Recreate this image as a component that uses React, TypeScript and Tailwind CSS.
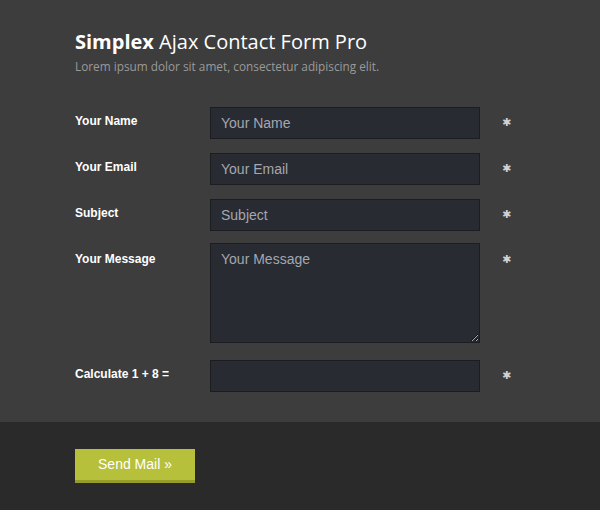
import React from "react";

const FIELDS = [
  { label: "Your Name", placeholder: "Your Name" },
  { label: "Your Email", placeholder: "Your Email" },
  { label: "Subject", placeholder: "Subject" },
];

const inputCls =
  "w-[270px] h-8 bg-[#292b32] border border-[#1c1d21] px-[10px] text-[14px] text-[#a3a7b0] placeholder:text-[#a3a7b0] outline-none font-['Liberation_Sans',Arial,sans-serif]";

function Star() {
  return (
    <span className="block w-[52px] pl-[22px] text-[11px] text-[#d2d2d2] leading-none font-['DejaVu_Sans',sans-serif]">
      ✱
    </span>
  );
}

export default function App() {
  return (
    <div className="w-[600px] h-[510px] flex flex-col bg-[#3d3d3d] font-['Liberation_Sans',Arial,sans-serif]">
      <div className="flex-1 pl-[75px] pt-[29px]">
        <h1 className="text-[20px] leading-[26px] text-white font-['Open_Sans',sans-serif]">
          <span className="font-bold">Simplex</span> Ajax Contact Form Pro
        </h1>
        <p className="mt-[3px] text-[11.8px] leading-[16px] text-[#9a9a9a] font-['Open_Sans',sans-serif]">
          Lorem ipsum dolor sit amet, consectetur adipiscing elit.
        </p>

        <div className="mt-[33px] flex flex-col gap-[14px]">
          {FIELDS.map((f) => (
            <div key={f.label} className="flex items-start h-8">
              <label className="w-[135px] pt-[6px] text-[12px] leading-[16px] font-bold text-white">
                {f.label}
              </label>
              <input className={inputCls} placeholder={f.placeholder} />
              <div className="pt-[10px]">
                <Star />
              </div>
            </div>
          ))}
          <div className="flex items-start h-[100px] -mt-[2px]">
            <label className="w-[135px] pt-[8px] text-[12px] leading-[16px] font-bold text-white">
              Your Message
            </label>
            <textarea
              className="w-[270px] h-[100px] bg-[#292b32] border border-[#1c1d21] px-[10px] pt-[5px] text-[14px] text-[#a3a7b0] placeholder:text-[#a3a7b0] outline-none resize-y"
              placeholder="Your Message"
            />
            <div className="pt-[11px]">
              <Star />
            </div>
          </div>
          <div className="flex items-start h-8 mt-[3px]">
            <label className="w-[135px] pt-[6px] text-[12px] leading-[16px] font-bold text-white">
              Calculate 1 + 8 =
            </label>
            <input className={inputCls} />
            <div className="pt-[10px]">
              <Star />
            </div>
          </div>
        </div>
      </div>
      <div className="h-[88px] bg-[#2a2a2a] pl-[75px] pt-[27px]">
        <button className="w-[120px] h-[34px] bg-[#b7c03b] border-b-[3px] border-[#969e2a] text-[14px] text-white">
          Send Mail »
        </button>
      </div>
    </div>
  );
}
